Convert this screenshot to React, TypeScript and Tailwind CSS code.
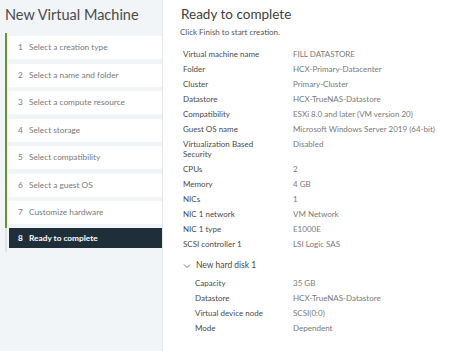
import React from "react";

const steps = [
  "Select a creation type",
  "Select a name and folder",
  "Select a compute resource",
  "Select storage",
  "Select compatibility",
  "Select a guest OS",
  "Customize hardware",
];

const rows: [React.ReactNode, string][] = [
  ["Virtual machine name", "FILL DATASTORE"],
  ["Folder", "HCX-Primary-Datacenter"],
  ["Cluster", "Primary-Cluster"],
  ["Datastore", "HCX-TrueNAS-Datastore"],
  ["Compatibility", "ESXi 8.0 and later (VM version 20)"],
  ["Guest OS name", "Microsoft Windows Server 2019 (64-bit)"],
  [
    <>
      Virtualization Based
      <br />
      Security
    </>,
    "Disabled",
  ],
  ["CPUs", "2"],
  ["Memory", "4 GB"],
  ["NICs", "1"],
  ["NIC 1 network", "VM Network"],
  ["NIC 1 type", "E1000E"],
  ["SCSI controller 1", "LSI Logic SAS"],
];

const disk: [string, string][] = [
  ["Capacity", "35 GB"],
  ["Datastore", "HCX-TrueNAS-Datastore"],
  ["Virtual device node", "SCSI(0:0)"],
  ["Mode", "Dependent"],
];

export default function App() {
  return (
    <div
      className="flex w-[474px] h-[353px] bg-white overflow-hidden"
      style={{ fontFamily: "Lato, 'Noto Sans', sans-serif" }}
    >
      <aside className="w-[163px] h-[351px] shrink-0 bg-[#f1f5f8] border-r border-[#e1e5e9] flex flex-col">
        <h1 className="h-[33px] pl-[5px] pt-[5px] text-[14.5px] leading-[20px] text-[#4a4a4a] font-normal">
          New Virtual Machine
        </h1>
        <div className="pl-[5px]">
          <div className="border-l-[2px] border-[#5e9b2f] pt-[3px] pb-[4px] flex flex-col gap-[4.5px]">
            {steps.map((s, i) => (
              <div
                key={s}
                className="ml-[1px] h-[23px] bg-white flex items-center text-[8.3px] text-[#7a7a7a]"
              >
                <span className="w-[21px] pl-[10px]">{i + 1}</span>
                <span>{s}</span>
              </div>
            ))}
          </div>
          <div className="border-l-[2px] border-[#dfe3e7] pb-[4px]">
            <div className="ml-[2px] h-[20px] bg-[#1f2f3a] flex items-center text-[8.3px] text-white font-bold">
              <span className="w-[20px] pl-[9px]">8</span>
              <span>Ready to complete</span>
            </div>
          </div>
        </div>
      </aside>
      <main className="flex-1 pl-[17px] pt-[4px]">
        <h2 className="text-[13.5px] leading-[20px] text-[#3d3d3d] font-normal pl-[1px]">
          Ready to complete
        </h2>
        <p className="text-[8px] leading-[14px] text-[#555] mt-[1px]">
          Click Finish to start creation.
        </p>
        <div className="mt-[7px] pl-[3px]">
          {rows.map(([k, v], i) => (
            <div key={i} className="flex py-[2.5px] text-[8px] leading-[10px]">
              <div className="w-[110px] text-[#4a4a4a]">{k}</div>
              <div className="text-[#7a7a7a]">{v}</div>
            </div>
          ))}
          <div className="flex items-center mt-[7px] h-[15px] text-[8.5px] text-[#4a4a4a]">
            <svg width="8" height="8" viewBox="0 0 8 8" className="ml-[0px] mr-[5px]">
              <path d="M1 2.5 L4 5.5 L7 2.5" fill="none" stroke="#666" strokeWidth="0.9" />
            </svg>
            <span>New hard disk 1</span>
          </div>
          <div className="mt-[2px] pl-[12px]">
            {disk.map(([k, v]) => (
              <div key={k} className="flex py-[2.6px] text-[8px] leading-[10px]">
                <div className="w-[98px] text-[#4a4a4a]">{k}</div>
                <div className="text-[#7a7a7a]">{v}</div>
              </div>
            ))}
          </div>
        </div>
      </main>
    </div>
  );
}
